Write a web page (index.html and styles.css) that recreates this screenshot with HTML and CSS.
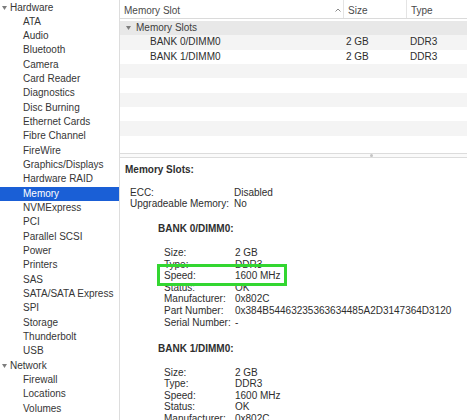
FILE: index.html
```html
<!DOCTYPE html>
<html>
<head>
<meta charset="utf-8">
<link rel="stylesheet" href="styles.css">
</head>
<body>
<div class="window">
  <aside class="sidebar">
    <div class="group"><svg class="tri" width="5" height="4" viewBox="0 0 5 4"><path d="M0 0H5L2.5 4Z"/></svg>Hardware</div>
    <div class="item">ATA</div>
    <div class="item">Audio</div>
    <div class="item">Bluetooth</div>
    <div class="item">Camera</div>
    <div class="item">Card Reader</div>
    <div class="item">Diagnostics</div>
    <div class="item">Disc Burning</div>
    <div class="item">Ethernet Cards</div>
    <div class="item">Fibre Channel</div>
    <div class="item">FireWire</div>
    <div class="item">Graphics/Displays</div>
    <div class="item">Hardware RAID</div>
    <div class="item selected">Memory</div>
    <div class="item">NVMExpress</div>
    <div class="item">PCI</div>
    <div class="item">Parallel SCSI</div>
    <div class="item">Power</div>
    <div class="item">Printers</div>
    <div class="item">SAS</div>
    <div class="item">SATA/SATA Express</div>
    <div class="item">SPI</div>
    <div class="item">Storage</div>
    <div class="item">Thunderbolt</div>
    <div class="item">USB</div>
    <div class="group"><svg class="tri" width="5" height="4" viewBox="0 0 5 4"><path d="M0 0H5L2.5 4Z"/></svg>Network</div>
    <div class="item">Firewall</div>
    <div class="item">Locations</div>
    <div class="item">Volumes</div>
  </aside>
  <main class="content">
    <div class="table">
      <div class="thead">
        <div class="th c1"><span>Memory Slot</span><svg class="sort" width="6" height="4" viewBox="0 0 6 4"><path d="M0.5 3.5L3 1L5.5 3.5" fill="none" stroke="#8a8a8a" stroke-width="1"/></svg></div>
        <div class="th c2">Size</div>
        <div class="th c3">Type</div>
      </div>
      <div class="tbody">
        <div class="row grp"><div class="td c1"><svg class="tri" width="5" height="4" viewBox="0 0 5 4"><path d="M0 0H5L2.5 4Z"/></svg>Memory Slots</div><div class="td c2"></div><div class="td c3"></div></div>
        <div class="row odd"><div class="td c1 leaf">BANK 0/DIMM0</div><div class="td c2">2 GB</div><div class="td c3">DDR3</div></div>
        <div class="row"><div class="td c1 leaf">BANK 1/DIMM0</div><div class="td c2">2 GB</div><div class="td c3">DDR3</div></div>
        <div class="row odd"></div>
        <div class="row"></div>
        <div class="row odd"></div>
        <div class="row"></div>
        <div class="row odd"></div>
        <div class="row"></div>
      </div>
    </div>
    <div class="splitter"><span class="dimple"></span></div>
    <div class="details">
      <div class="h1">Memory Slots:</div>
      <div class="kv top">
        <div>ECC:</div><div>Disabled</div>
        <div>Upgradeable Memory:</div><div>No</div>
      </div>
      <div class="h2">BANK 0/DIMM0:</div>
      <div class="kv bank">
        <div>Size:</div><div>2 GB</div>
        <div>Type:</div><div>DDR3</div>
        <div>Speed:</div><div>1600 MHz</div>
        <div>Status:</div><div>OK</div>
        <div>Manufacturer:</div><div>0x802C</div>
        <div>Part Number:</div><div>0x384B54463235363634485A2D3147364D3120</div>
        <div>Serial Number:</div><div>-</div>
      </div>
      <div class="h2 second">BANK 1/DIMM0:</div>
      <div class="kv bank">
        <div>Size:</div><div>2 GB</div>
        <div>Type:</div><div>DDR3</div>
        <div>Speed:</div><div>1600 MHz</div>
        <div>Status:</div><div>OK</div>
        <div>Manufacturer:</div><div>0x802C</div>
      </div>
      <div class="highlight"></div>
    </div>
  </main>
</div>
</body>
</html>
```

FILE: styles.css
```css
html, body {
  margin: 0;
  padding: 0;
  background: #ffffff;
  overflow: hidden;
}
body {
  font-family: "Liberation Sans", Arial, sans-serif;
  font-size: 10px;
  color: #2e2e2e;
}
.window {
  display: flex;
  width: 467px;
  height: 420px;
  overflow: hidden;
}
.sidebar {
  width: 119px;
  flex: 0 0 119px;
  border-right: 1px solid #dddddd;
  padding-top: 0.5px;
  color: #363636;
  white-space: nowrap;
}
.sidebar .group,
.sidebar .item {
  height: 14.33px;
  line-height: 14.33px;
  display: flex;
  align-items: center;
}
.sidebar .group {
  padding-left: 2px;
}
.tri {
  fill: #7d7d7d;
  flex: 0 0 auto;
  margin-right: 3px;
}
.sidebar .item {
  padding-left: 23px;
}
.sidebar .selected {
  background: #1a5fd6;
  color: #ffffff;
}
.content {
  flex: 1 1 auto;
  min-width: 0;
  display: flex;
  flex-direction: column;
}
.table {
  white-space: nowrap;
}
.thead {
  display: flex;
  height: 18px;
  border-bottom: 1px solid #dadada;
  color: #4a4a4a;
}
.th {
  line-height: 22px;
  height: 18px;
  box-sizing: border-box;
}
.c1 {
  width: 223px;
  flex: 0 0 223px;
  box-sizing: border-box;
  padding-left: 4px;
}
.c2 {
  width: 63px;
  flex: 0 0 63px;
  box-sizing: border-box;
  padding-left: 3px;
}
.c3 {
  flex: 1 0 80px;
  box-sizing: border-box;
  padding-left: 4px;
}
.th.c1 {
  display: flex;
  align-items: flex-start;
  justify-content: space-between;
  padding-right: 2px;
}
.sort {
  margin-top: 8px;
}
.th.c2 {
  border-left: 1px solid #e4e4e4;
  padding-left: 4px;
}
.th.c3 {
  border-left: 1px solid #e4e4e4;
}
.tbody {
  margin-top: 2px;
}
.row {
  display: flex;
  height: 14.35px;
  line-height: 14.35px;
}
.row.odd {
  background: #f4f4f4;
}
.row.grp {
  background: #e8e8e8;
  color: #404040;
}
.row.grp .c1 {
  display: flex;
  align-items: center;
  padding-left: 6px;
}
.row.grp .tri {
  margin-right: 5px;
}
.td.leaf {
  padding-left: 30px;
}
.splitter {
  margin-top: 3px;
  height: 7px;
  border-top: 1px solid #dcdcdc;
  border-bottom: 1px solid #dcdcdc;
  background: #fafafa;
  display: flex;
  align-items: center;
}
.dimple {
  width: 3px;
  height: 3px;
  border-radius: 50%;
  background: #c4c4c4;
  margin-left: 250px;
}
.details {
  position: relative;
  flex: 1 1 auto;
  padding-top: 5.5px;
  line-height: 11.55px;
  white-space: nowrap;
}
.h1 {
  font-weight: bold;
  padding-left: 5px;
}
.h2 {
  font-weight: bold;
  padding-left: 38px;
  margin-top: 13.5px;
}
.h2.second {
  margin-top: 14.8px;
}
.kv {
  display: grid;
}
.kv.top {
  margin-top: 11.6px;
  padding-left: 10px;
  grid-template-columns: 104px auto;
}
.kv.bank {
  margin-top: 12.4px;
  padding-left: 44px;
  grid-template-columns: 71px auto;
}
.highlight {
  position: absolute;
  left: 37px;
  top: 106px;
  width: 130px;
  height: 22px;
  box-sizing: border-box;
  border: 3px solid #33d631;
}
```
